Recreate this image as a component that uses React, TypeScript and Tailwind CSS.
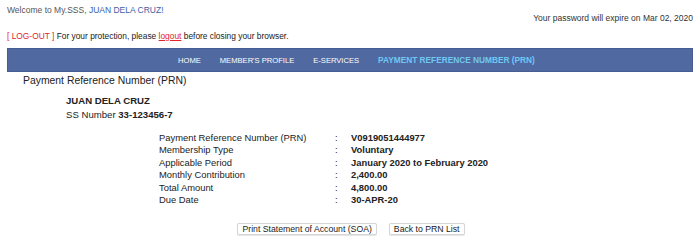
import React from 'react';

const rows: [string, string][] = [
  ['Payment Reference Number (PRN)', 'V0919051444977'],
  ['Membership Type', 'Voluntary'],
  ['Applicable Period', 'January 2020 to February 2020'],
  ['Monthly Contribution', '2,400.00'],
  ['Total Amount', '4,800.00'],
  ['Due Date', '30-APR-20'],
];

export default function App() {
  return (
    <div
      className="w-[700px] h-[247px] bg-white text-[#222] overflow-hidden"
      style={{ fontFamily: '"Liberation Sans", Arial, sans-serif' }}
    >
      {/* Header */}
      <div className="px-[7px]">
        <div className="flex justify-between">
          <div className="pt-[4px] text-[8.5px] text-[#555]">
            Welcome to My.SSS, <span className="text-[#3b5ea6]">JUAN DELA CRUZ!</span>
          </div>
          <div className="pt-[12px] text-[8.5px] text-[#333]">Your password will expire on Mar 02, 2020</div>
        </div>
        <div className="mt-[5px] text-[8.4px] text-[#222]">
          <span className="text-[#e3242b]">[ LOG-OUT ]</span> For your protection, please{' '}
          <span className="text-[#e3242b] underline">logout</span> before closing your browser.
        </div>

        {/* Nav */}
        <div className="mt-[6px] h-[24px] bg-[#5069a1] border border-[#465d92] flex items-center text-[7.6px] text-white">
          <div className="ml-[170px] flex items-center gap-[19px]">
            <span>HOME</span>
            <span>MEMBER&apos;S PROFILE</span>
            <span>E-SERVICES</span>
            <span className="font-bold text-[8.3px] text-[#6fc8f2]">PAYMENT REFERENCE NUMBER (PRN)</span>
          </div>
        </div>
      </div>

      {/* Content */}
      <div className="pl-[23px] pt-[1px] text-[10.4px]">Payment Reference Number (PRN)</div>

      <div className="pl-[66px] pt-[5px] text-[9.6px] leading-[14px]">
        <div className="font-bold">JUAN DELA CRUZ</div>
        <div>
          SS Number <span className="font-bold">33-123456-7</span>
        </div>
      </div>

      <div className="pl-[159px] pt-[10px] text-[9.4px] leading-[12.4px]">
        {rows.map(([label, value]) => (
          <div key={label} className="flex">
            <span className="w-[176px]">{label}</span>
            <span className="w-[16px]">:</span>
            <span className="font-bold">{value}</span>
          </div>
        ))}
      </div>

      <div className="flex justify-center gap-[12px] pt-[17px] pl-[2px] text-[8.7px]">
        <button className="h-[12px] px-[4px] bg-white border border-[#d6d6d6] rounded-[2px] leading-none shadow-[0_0.5px_1px_rgba(0,0,0,0.1)]">
          Print Statement of Account (SOA)
        </button>
        <button className="h-[12px] px-[4px] bg-white border border-[#d6d6d6] rounded-[2px] leading-none shadow-[0_0.5px_1px_rgba(0,0,0,0.1)]">
          Back to PRN List
        </button>
      </div>
    </div>
  );
}
